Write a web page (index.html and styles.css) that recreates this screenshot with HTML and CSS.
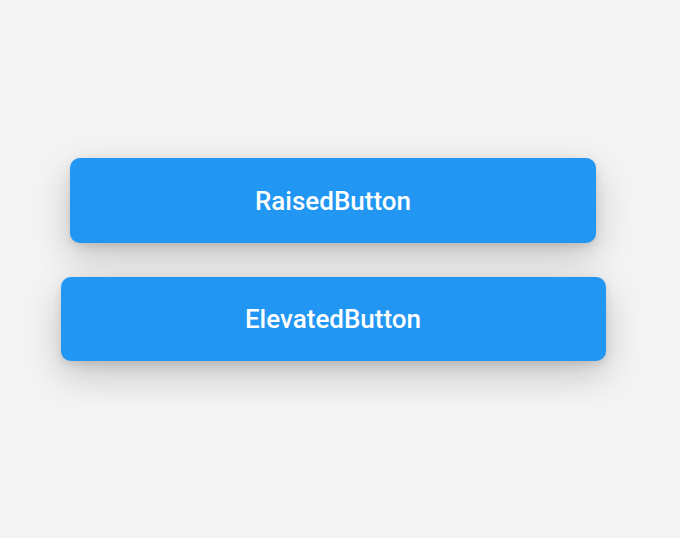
FILE: index.html
```html
<!DOCTYPE html>
<html>
<head>
<meta charset="utf-8">
<link rel="stylesheet" href="styles.css">
</head>
<body>
<div class="stack">
  <button class="btn raised">RaisedButton</button>
  <button class="btn elevated">ElevatedButton</button>
</div>
</body>
</html>
```
FILE: styles.css
```css
html, body {
  margin: 0;
  padding: 0;
  background: #f4f4f4;
  width: 680px;
  height: 538px;
  overflow: hidden;
}
.stack {
  display: flex;
  flex-direction: column;
  align-items: center;
  gap: 34px;
  padding-top: 158px;
  padding-right: 14px;
}
.btn {
  border: none;
  background: #2196f3;
  color: #ffffff;
  font-family: Roboto, "Liberation Sans", sans-serif;
  font-weight: 500;
  font-size: 26px;
  border-radius: 10px;
  height: 85px;
  padding: 0;
  box-shadow: 0 14px 38px rgba(0,0,0,0.2), 0 4px 10px rgba(0,0,0,0.1), 0 0 1px rgba(0,0,0,0.15);
}
.raised { width: 526px; }
.elevated { width: 545px; height: 84px; }
```
